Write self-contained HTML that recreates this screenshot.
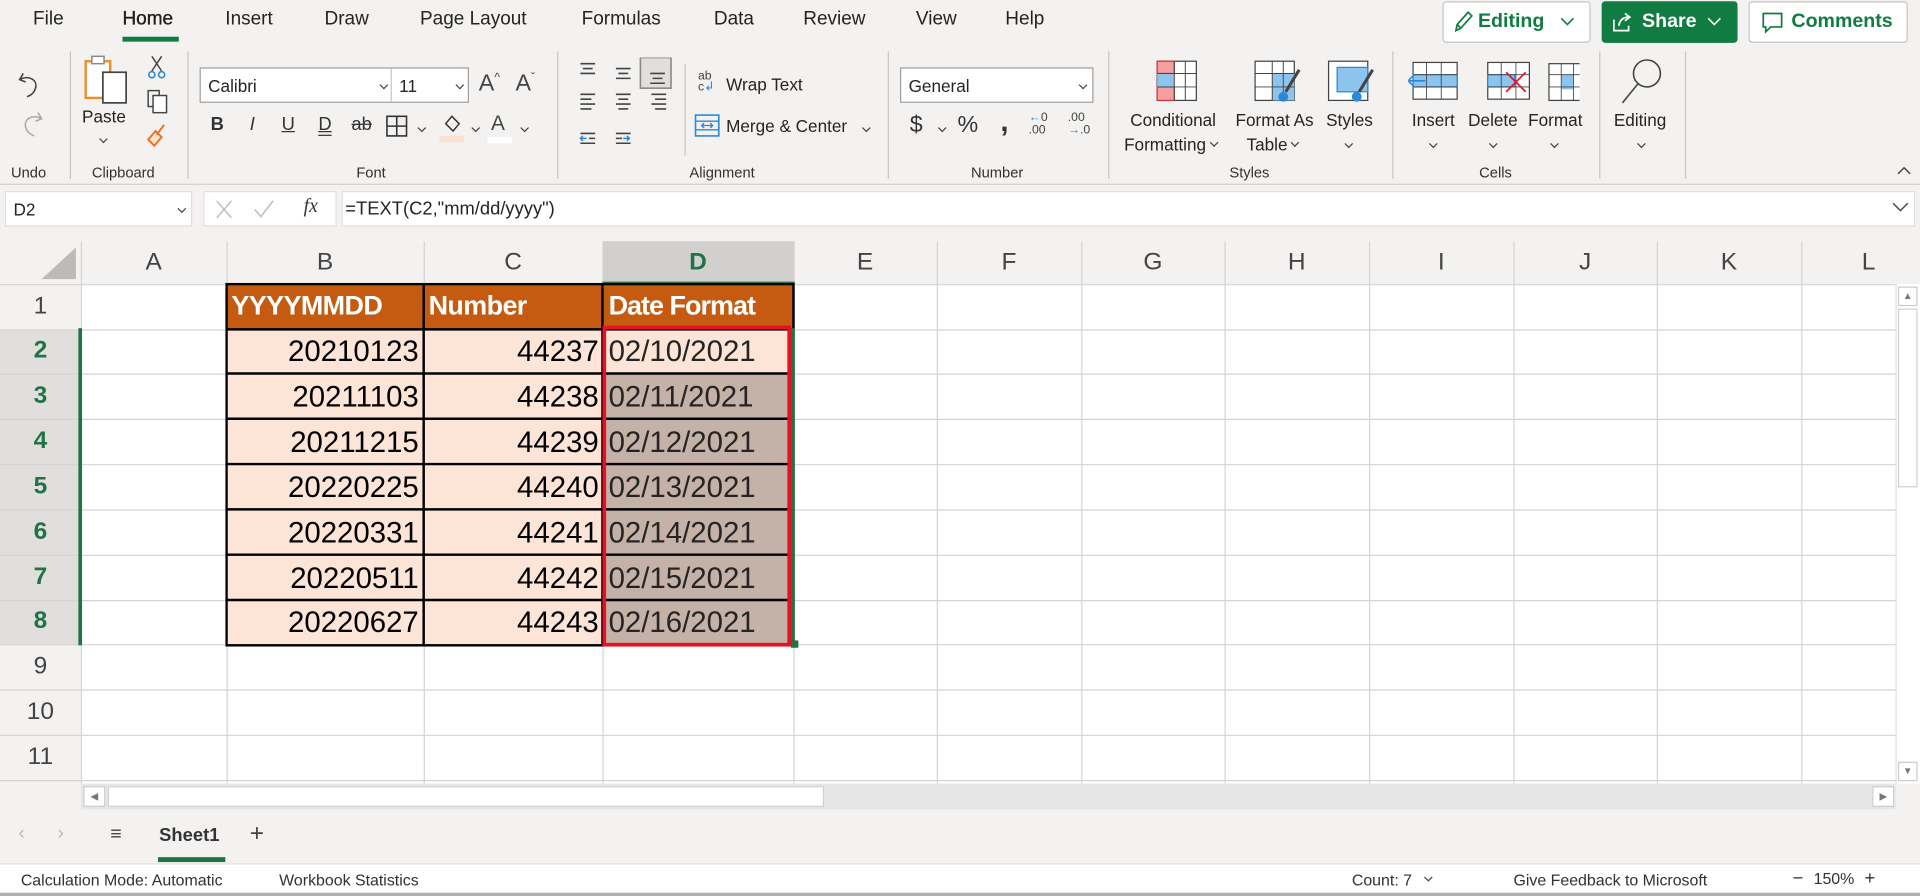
<!DOCTYPE html>
<html><head><meta charset="utf-8">
<style>
*{box-sizing:border-box;margin:0;padding:0}
html,body{width:1920px;height:896px;overflow:hidden;background:#f3f2f1}
#w{position:absolute;left:0;top:0;width:1568px;height:732px;transform:scale(1.22449);transform-origin:0 0;font-family:"Liberation Sans",sans-serif;color:#252423;background:#f3f2f1;overflow:hidden}
.a{position:absolute}
.t{position:absolute;font-size:15.5px;top:7px;color:#252423}
.lbl{position:absolute;top:134px;font-size:12px;color:#323130;white-space:nowrap}
.sep{position:absolute;top:42px;width:1px;height:104px;background:#c8c6c4}
.rt{position:absolute;font-size:14px;color:#252423;white-space:nowrap}
.chev{position:absolute;font-size:0;width:5px;height:5px;border-right:1.1px solid #444;border-bottom:1.1px solid #444;transform:rotate(45deg);margin-top:5px;margin-left:2px}
.ich{display:inline-block;width:5px;height:5px;border-right:1.1px solid #444;border-bottom:1.1px solid #444;transform:rotate(45deg);margin-left:4px;vertical-align:4px}
.hdr{position:absolute;font-size:20px;color:#444;text-align:center}
.num{position:absolute;font-size:24px;color:#000;text-align:right}
</style></head><body><div id="w">
<!-- tabs -->
<div class="t" style="left:27px">File</div>
<div class="t" style="left:100px;color:#201f1e;-webkit-text-stroke:0.3px #201f1e">Home</div>
<div class="a" style="left:100px;top:30px;width:46px;height:4px;background:#107c41"></div>
<div class="t" style="left:184px">Insert</div>
<div class="t" style="left:265px">Draw</div>
<div class="t" style="left:343px">Page Layout</div>
<div class="t" style="left:475px">Formulas</div>
<div class="t" style="left:583px">Data</div>
<div class="t" style="left:656px">Review</div>
<div class="t" style="left:748px">View</div>
<div class="t" style="left:821px">Help</div>
<!-- top buttons -->
<div class="a" style="left:1178px;top:1px;width:121px;height:34px;background:#fff;border:1px solid #c8c6c4;border-radius:3px"></div>
<svg class="a" style="left:1186px;top:8px" width="18" height="20" viewBox="0 0 18 20"><path d="M3 17 L4 12 L13 2 L16 5 L7 15 Z M4 12 L7 15" fill="none" stroke="#107c41" stroke-width="1.4"/></svg>
<div class="a" style="left:1207px;top:9px;font-size:16px;color:#107c41;font-weight:bold">Editing</div>
<svg class="a" style="left:1273px;top:13px" width="14" height="10"><path d="M2 2 L7 7 L12 2" fill="none" stroke="#107c41" stroke-width="1.3"/></svg>
<div class="a" style="left:1308px;top:1px;width:111px;height:34px;background:#107c41;border-radius:3px"></div>
<svg class="a" style="left:1315px;top:8px" width="20" height="20" viewBox="0 0 20 20"><path d="M3 8 V17 H15 V13 M7 13 C8 8 11 6 15 6 M12 3 L16 6 L12 9" fill="none" stroke="#fff" stroke-width="1.4"/></svg>
<div class="a" style="left:1341px;top:9px;font-size:16px;color:#fff;font-weight:bold">Share</div>
<svg class="a" style="left:1393px;top:13px" width="14" height="10"><path d="M2 2 L7 7 L12 2" fill="none" stroke="#fff" stroke-width="1.3"/></svg>
<div class="a" style="left:1428px;top:1px;width:130px;height:34px;background:#fff;border:1px solid #c8c6c4;border-radius:3px"></div>
<svg class="a" style="left:1438px;top:9px" width="20" height="20" viewBox="0 0 20 20"><path d="M2 2 H17 V13 H8 L4 17 V13 H2 Z" fill="none" stroke="#107c41" stroke-width="1.4"/></svg>
<div class="a" style="left:1463px;top:9px;font-size:16px;color:#107c41;font-weight:bold">Comments</div>
<!-- ribbon separators -->
<div class="sep" style="left:57px"></div><div class="sep" style="left:153px"></div><div class="sep" style="left:455px"></div><div class="sep" style="left:725px"></div><div class="sep" style="left:905px"></div><div class="sep" style="left:1137px"></div><div class="sep" style="left:1306px"></div><div class="sep" style="left:1376px"></div>
<div class="a" style="left:559px;top:52px;width:1px;height:75px;background:#c8c6c4"></div>
<div class="lbl" style="left:9px">Undo</div><div class="lbl" style="left:75px">Clipboard</div><div class="lbl" style="left:291px">Font</div><div class="lbl" style="left:563px">Alignment</div><div class="lbl" style="left:793px">Number</div><div class="lbl" style="left:1004px">Styles</div><div class="lbl" style="left:1208px">Cells</div>
<svg class="a" style="left:1547px;top:133px" width="16" height="12"><path d="M3 9 L8 4 L13 9" fill="none" stroke="#444" stroke-width="1.2"/></svg>
<!-- undo -->
<svg class="a" style="left:13px;top:56px" width="24" height="60" viewBox="0 0 24 60"><path d="M6 4 L3 9 L8 11 M3 9 C10 5 18 9 16 16 C15 20 12 22 9 23" fill="none" stroke="#444" stroke-width="1.3"/><path d="M18 36 L21 41 L16 43 M21 41 C14 37 6 41 8 48 C9 52 12 54 15 55" fill="none" stroke="#aaa" stroke-width="1.3"/></svg>
<!-- paste -->
<svg class="a" style="left:66px;top:44px" width="44" height="42" viewBox="0 0 44 42"><rect x="4" y="6" width="20" height="30" fill="#fff" stroke="#e8912d" stroke-width="2"/><rect x="9" y="2" width="10" height="6" fill="#fff" stroke="#888" stroke-width="1.2"/><rect x="18" y="15" width="19" height="25" fill="#fff" stroke="#444" stroke-width="1.4"/></svg>
<div class="rt" style="left:67px;top:87px">Paste</div><div class="chev" style="left:80px;top:106px"></div>
<svg class="a" style="left:118px;top:44px" width="22" height="80" viewBox="0 0 22 80"><path d="M6 2 L14 14 M14 2 L6 14" stroke="#444" stroke-width="1.2"/><circle cx="6" cy="17" r="2.5" fill="none" stroke="#2b88d8" stroke-width="1.3"/><circle cx="14" cy="17" r="2.5" fill="none" stroke="#2b88d8" stroke-width="1.3"/><rect x="3" y="30" width="9" height="13" fill="none" stroke="#444" stroke-width="1.2"/><rect x="7" y="34" width="11" height="14" fill="#fff" stroke="#444" stroke-width="1.2"/><path d="M16 58 L10 66 M3 70 L9 63 L14 68 L8 75 Z" fill="#fde3c5" stroke="#e8712d" stroke-width="1.6"/></svg>
<!-- font -->
<div class="a" style="left:163px;top:55px;width:220px;height:29px;background:#fff;border:1px solid #a19f9d"></div>
<div class="a" style="left:319px;top:56px;width:1px;height:27px;background:#c8c6c4"></div>
<div class="rt" style="left:170px;top:62px">Calibri</div><div class="chev" style="left:309px;top:62px"></div>
<div class="rt" style="left:326px;top:62px">11</div><div class="chev" style="left:371px;top:62px"></div>
<div class="a" style="left:391px;top:58px;font-size:19px;color:#444">A<span style="font-size:10px;vertical-align:top">^</span></div>
<div class="a" style="left:421px;top:58px;font-size:19px;color:#444">A<span style="font-size:10px;vertical-align:top">&#711;</span></div>
<div class="a" style="left:172px;top:93px;font-size:15px;font-weight:bold;color:#333">B</div>
<div class="a" style="left:204px;top:93px;font-size:15px;font-style:italic;color:#333">I</div>
<div class="a" style="left:230px;top:93px;font-size:15px;text-decoration:underline;color:#333">U</div>
<div class="a" style="left:260px;top:93px;font-size:15px;text-decoration:underline double;color:#333">D</div>
<div class="a" style="left:287px;top:93px;font-size:15px;text-decoration:line-through;color:#333">ab</div>
<svg class="a" style="left:315px;top:94px" width="20" height="20"><rect x="1" y="1" width="16" height="16" fill="none" stroke="#333" stroke-width="1.3"/><path d="M9 1 V17 M1 9 H17" stroke="#333" stroke-width="1.3"/></svg>
<div class="chev" style="left:340px;top:97px"></div>
<svg class="a" style="left:359px;top:91px" width="20" height="26"><path d="M5 10 L10 4 L16 10 L11 16 Z M5 10 L11 16" fill="none" stroke="#333" stroke-width="1.2"/><rect x="0" y="20" width="20" height="5" fill="#fbe0d1"/></svg>
<div class="chev" style="left:384px;top:97px"></div>
<div class="a" style="left:401px;top:91px;font-size:17px;color:#444">A</div><div class="a" style="left:398px;top:112px;width:20px;height:5px;background:#fff"></div>
<div class="chev" style="left:424px;top:97px"></div>
<!-- alignment -->
<svg class="a" style="left:468px;top:47px" width="85" height="80" viewBox="0 0 85 80">
<g stroke="#444" stroke-width="1.3"><path d="M6 5H18M8 9H16M6 13H18"/><path d="M35 9H47M37 13H45M35 17H47"/><rect x="55" y="0" width="25" height="25" fill="#e1dfdd" stroke="#8a8886"/><path d="M63 13H75M65 17H73M63 21H75"/>
<path d="M6 30H18M6 34H15M6 38H18M6 42H15"/><path d="M35 30H47M37 34H45M35 38H47M37 42H45"/><path d="M64 30H76M67 34H76M64 38H76M67 42H76"/>
<path d="M6 62H18M13 66H18M6 70H18"/><path d="M35 62H47M35 66H40M35 70H47"/></g>
<path d="M6 66H11M8 64L6 66L8 68" stroke="#2b88d8" stroke-width="1.2" fill="none"/><path d="M41 66H46M44 64L46 66L44 68" stroke="#2b88d8" stroke-width="1.2" fill="none"/></svg>
<div class="a" style="left:570px;top:58px;font-size:10px;line-height:9px;color:#444">ab<br>c<span style="color:#2b88d8">↲</span></div>
<div class="rt" style="left:593px;top:61px">Wrap Text</div>
<svg class="a" style="left:567px;top:93px" width="22" height="20"><rect x="1" y="1" width="19" height="17" fill="none" stroke="#2b88d8" stroke-width="1.3"/><path d="M1 6H20M1 13H20M6 9.5H15M8 7.5L6 9.5L8 11.5M13 7.5L15 9.5L13 11.5" stroke="#2b88d8" stroke-width="1.1" fill="none"/></svg>
<div class="rt" style="left:593px;top:95px">Merge &amp; Center</div><div class="chev" style="left:703px;top:97px"></div>
<!-- number -->
<div class="a" style="left:735px;top:55px;width:158px;height:29px;background:#fff;border:1px solid #a19f9d"></div>
<div class="rt" style="left:742px;top:62px">General</div><div class="chev" style="left:880px;top:62px"></div>
<div class="a" style="left:743px;top:92px;font-size:19px;color:#333">$</div><div class="chev" style="left:765px;top:97px"></div>
<div class="a" style="left:782px;top:92px;font-size:19px;color:#333">%</div>
<div class="a" style="left:817px;top:86px;font-size:24px;font-weight:bold;color:#333">,</div>
<div class="a" style="left:840px;top:92px;font-size:10px;line-height:10px;color:#444"><span style="color:#2b88d8">←</span>0<br>.00</div>
<div class="a" style="left:872px;top:92px;font-size:10px;line-height:10px;color:#444">.00<br><span style="color:#2b88d8">→</span>.0</div>
<!-- styles -->
<svg class="a" style="left:944px;top:49px" width="34" height="34" viewBox="0 0 34 34"><rect x="1" y="1" width="32" height="32" fill="#fff" stroke="#444"/><rect x="1" y="1" width="14" height="10" fill="#f4a0a0" stroke="#d13438"/><rect x="1" y="22" width="14" height="11" fill="#f4a0a0" stroke="#d13438"/><rect x="1" y="11" width="14" height="11" fill="#8cc4ee"/><path d="M1 11H33M1 22H33M15 1V33M24 1V33" stroke="#444" stroke-width=".8"/></svg>
<div class="rt" style="left:923px;top:90px">Conditional</div><div class="rt" style="left:918px;top:110px">Formatting<span class="ich"></span></div>
<svg class="a" style="left:1024px;top:49px" width="40" height="38" viewBox="0 0 40 38"><rect x="1" y="1" width="32" height="32" fill="#fff" stroke="#444"/><rect x="15" y="11" width="18" height="22" fill="#8cc4ee"/><path d="M1 11H33M1 22H33M15 1V33M24 1V33" stroke="#444" stroke-width=".8"/><path d="M37 8 L26 26" stroke="#444" stroke-width="2.5"/><circle cx="24" cy="30" r="4" fill="#2b88d8"/></svg>
<div class="rt" style="left:1009px;top:90px">Format As</div><div class="rt" style="left:1018px;top:110px">Table<span class="ich"></span></div>
<svg class="a" style="left:1084px;top:49px" width="40" height="38" viewBox="0 0 40 38"><rect x="1" y="1" width="32" height="32" fill="#fff" stroke="#444"/><rect x="8" y="6" width="25" height="20" fill="#8cc4ee" stroke="#2b88d8"/><path d="M37 8 L26 26" stroke="#444" stroke-width="2.5"/><circle cx="24" cy="30" r="4" fill="#2b88d8"/></svg>
<div class="rt" style="left:1083px;top:90px">Styles</div><div class="chev" style="left:1097px;top:110px"></div>
<!-- cells -->
<svg class="a" style="left:1150px;top:49px" width="140" height="36" viewBox="0 0 140 36"><g stroke="#444" fill="#fff"><rect x="4" y="2" width="36" height="30"/><rect x="65" y="2" width="34" height="30"/><rect x="115" y="3" width="36" height="30"/></g>
<rect x="4" y="12" width="36" height="10" fill="#8cc4ee" stroke="#2b88d8"/><rect x="65" y="12" width="22" height="10" fill="#8cc4ee" stroke="#2b88d8"/><rect x="125" y="12" width="10" height="12" fill="#8cc4ee"/>
<path d="M4 12H40M4 22H40M15 2V32M27 2V32M65 12H99M65 22H99M76 2V32M88 2V32M115 12H151M115 22H151M125 3V33M135 3V33" stroke="#444" stroke-width=".7"/>
<path d="M0 17H14M5 12L0 17L5 22" stroke="#2b88d8" stroke-width="1.3" fill="none"/><path d="M80 10L96 26M96 10L80 26" stroke="#e81123" stroke-width="1.4"/></svg>
<div class="rt" style="left:1153px;top:90px">Insert</div><div class="chev" style="left:1166px;top:110px"></div>
<div class="rt" style="left:1199px;top:90px">Delete</div><div class="chev" style="left:1215px;top:110px"></div>
<div class="rt" style="left:1248px;top:90px">Format</div><div class="chev" style="left:1265px;top:110px"></div>
<!-- editing -->
<svg class="a" style="left:1320px;top:46px" width="44" height="40"><circle cx="25" cy="14" r="11" fill="none" stroke="#444" stroke-width="1.3"/><path d="M18 22 L5 38" stroke="#444" stroke-width="1.3"/></svg>
<div class="rt" style="left:1318px;top:90px">Editing</div><div class="chev" style="left:1336px;top:110px"></div>
<!-- formula bar -->
<div class="a" style="left:0;top:150px;width:1568px;height:1px;background:#d2d0ce"></div>
<div class="a" style="left:4px;top:156px;width:153px;height:29px;background:#fff;border:1px solid #e1dfdd"></div>
<div class="rt" style="left:11px;top:163px">D2</div><div class="chev" style="left:144px;top:163px"></div>
<div class="a" style="left:166px;top:156px;width:109px;height:29px;background:#fff;border:1px solid #e1dfdd"></div>
<svg class="a" style="left:174px;top:161px" width="60" height="20"><path d="M3 3L15 17M15 3L3 17" stroke="#bbb" stroke-width="1.2"/><path d="M34 10L39 16L49 3" stroke="#bbb" stroke-width="1.2" fill="none"/></svg>
<div class="a" style="left:248px;top:160px;font-size:16px;font-style:italic;font-family:'Liberation Serif',serif;color:#333">fx</div>
<div class="a" style="left:279px;top:156px;width:1285px;height:29px;background:#fff;border:1px solid #e1dfdd"></div>
<div class="rt" style="left:282px;top:162px;font-size:15px">=TEXT(C2,"mm/dd/yyyy")</div>
<svg class="a" style="left:1544px;top:162px" width="16" height="14"><path d="M2 4L8 10L14 4" fill="none" stroke="#444" stroke-width="1.2"/></svg>
<!-- grid area -->
<div class="a" style="left:0;top:197px;width:1548px;height:443px;background:#fff"></div>
<div class="a" style="left:0;top:197px;width:1548px;height:35px;background:#f3f2f1"></div>
<div class="a" style="left:0;top:232px;width:66px;height:408px;background:#f3f2f1"></div>
<div class="a" style="left:0;top:269px;width:66px;height:257px;background:#e1dfdd"></div>
<div class="a" style="left:492px;top:197px;width:156px;height:35px;background:#d2d0ce"></div>
<svg class="a" style="left:20px;top:200px" width="44" height="30"><path d="M42 2 V28 H14 Z" fill="#bdbbb9"/></svg>
<svg class="a" style="left:0;top:197px" width="1548" height="443">
<g stroke="#d4d4d4" stroke-width="1">
<path d="M66.5 0V443M185.5 0V443M346.5 0V443M492.5 0V443M648.5 0V443M765.5 0V443M883.5 0V443M1000.5 0V443M1118.5 0V443M1236.5 0V443M1353.5 0V443M1471.5 0V443"/>
<path d="M0 35.5H1548M0 72.5H1548M0 108.5H1548M0 145.5H1548M0 182.5H1548M0 219.5H1548M0 256.5H1548M0 293.5H1548M0 329.5H1548M0 366.5H1548M0 403.5H1548M0 440.5H1548"/>
</g></svg>
<div class="hdr" style="left:66px;top:203px;width:119px">A</div><div class="hdr" style="left:185px;top:203px;width:161px">B</div><div class="hdr" style="left:346px;top:203px;width:146px">C</div><div class="hdr" style="left:492px;top:203px;width:156px;color:#217346;font-weight:bold">D</div>
<div class="hdr" style="left:648px;top:203px;width:117px">E</div><div class="hdr" style="left:765px;top:203px;width:118px">F</div><div class="hdr" style="left:883px;top:203px;width:117px">G</div><div class="hdr" style="left:1000px;top:203px;width:118px">H</div><div class="hdr" style="left:1118px;top:203px;width:118px">I</div><div class="hdr" style="left:1236px;top:203px;width:117px">J</div><div class="hdr" style="left:1353px;top:203px;width:118px">K</div><div class="hdr" style="left:1471px;top:203px;width:110px">L</div>
<div class="hdr" style="left:0;top:239px;width:66px">1</div>
<div class="hdr" style="left:0;top:275px;width:66px;color:#217346;font-weight:bold">2</div>
<div class="hdr" style="left:0;top:312px;width:66px;color:#217346;font-weight:bold">3</div>
<div class="hdr" style="left:0;top:349px;width:66px;color:#217346;font-weight:bold">4</div>
<div class="hdr" style="left:0;top:386px;width:66px;color:#217346;font-weight:bold">5</div>
<div class="hdr" style="left:0;top:423px;width:66px;color:#217346;font-weight:bold">6</div>
<div class="hdr" style="left:0;top:460px;width:66px;color:#217346;font-weight:bold">7</div>
<div class="hdr" style="left:0;top:496px;width:66px;color:#217346;font-weight:bold">8</div>
<div class="hdr" style="left:0;top:533px;width:66px">9</div><div class="hdr" style="left:0;top:570px;width:66px">10</div><div class="hdr" style="left:0;top:607px;width:66px">11</div>
<!-- green selection markers -->
<div class="a" style="left:64px;top:268px;width:3px;height:259px;background:#217346"></div>
<div class="a" style="left:492px;top:230px;width:157px;height:3px;background:#217346"></div>
<!-- table -->
<div class="a" style="left:185px;top:232px;width:463px;height:37px;background:#c55a11"></div>
<div class="a" style="left:185px;top:269px;width:307px;height:257px;background:#fce4d6"></div>
<div class="a" style="left:492px;top:269px;width:156px;height:37px;background:#fce4d6"></div>
<div class="a" style="left:492px;top:305px;width:156px;height:221px;background:#c4b1a8"></div>
<svg class="a" style="left:184px;top:231px" width="466" height="298"><g stroke="#000" stroke-width="2" fill="none"><rect x="1" y="1" width="463" height="295"/><path d="M162 1V296M308 1V296M1 38H464M1 74H464M1 111H464M1 148H464M1 185H464M1 222H464M1 259H464"/></g></svg>
<div class="a" style="left:189px;top:237px;font-size:22px;font-weight:bold;color:#fff;letter-spacing:-0.5px">YYYYMMDD</div>
<div class="a" style="left:350px;top:237px;font-size:22px;font-weight:bold;color:#fff;letter-spacing:-0.5px">Number</div>
<div class="a" style="left:497px;top:237px;font-size:22px;font-weight:bold;color:#fff;letter-spacing:-0.8px">Date Format</div>
<div class="num" style="left:186px;top:274px;width:156px">20210123</div><div class="num" style="left:347px;top:274px;width:142px">44237</div><div class="a" style="left:497px;top:274px;font-size:24px">02/10/2021</div>
<div class="num" style="left:186px;top:311px;width:156px">20211103</div><div class="num" style="left:347px;top:311px;width:142px">44238</div><div class="a" style="left:497px;top:311px;font-size:24px">02/11/2021</div>
<div class="num" style="left:186px;top:348px;width:156px">20211215</div><div class="num" style="left:347px;top:348px;width:142px">44239</div><div class="a" style="left:497px;top:348px;font-size:24px">02/12/2021</div>
<div class="num" style="left:186px;top:385px;width:156px">20220225</div><div class="num" style="left:347px;top:385px;width:142px">44240</div><div class="a" style="left:497px;top:385px;font-size:24px">02/13/2021</div>
<div class="num" style="left:186px;top:422px;width:156px">20220331</div><div class="num" style="left:347px;top:422px;width:142px">44241</div><div class="a" style="left:497px;top:422px;font-size:24px">02/14/2021</div>
<div class="num" style="left:186px;top:459px;width:156px">20220511</div><div class="num" style="left:347px;top:459px;width:142px">44242</div><div class="a" style="left:497px;top:459px;font-size:24px">02/15/2021</div>
<div class="num" style="left:186px;top:495px;width:156px">20220627</div><div class="num" style="left:347px;top:495px;width:142px">44243</div><div class="a" style="left:497px;top:495px;font-size:24px">02/16/2021</div>
<div class="a" style="left:646px;top:268px;width:3px;height:259px;background:#217346"></div>
<div class="a" style="left:492px;top:266px;width:154px;height:262px;border:3px solid #e81123"></div>
<div class="a" style="left:646px;top:523px;width:6px;height:6px;background:#217346"></div>
<!-- scrollbars -->
<div class="a" style="left:1548px;top:232px;width:20px;height:408px;background:#fff;border-left:1px solid #e1dfdd"></div>
<div class="a" style="left:1550px;top:234px;width:16px;height:16px;border:1px solid #ccc;font-size:8px;text-align:center;line-height:14px;color:#777">▲</div>
<div class="a" style="left:1550px;top:252px;width:16px;height:146px;background:#fff;border:1px solid #d0d0d0"></div>
<div class="a" style="left:1550px;top:622px;width:16px;height:16px;border:1px solid #ccc;font-size:8px;text-align:center;line-height:14px;color:#777">▼</div>
<div class="a" style="left:66px;top:640px;width:1482px;height:21px;background:#e6e6e6"></div>
<div class="a" style="left:68px;top:642px;width:18px;height:17px;background:#fff;border:1px solid #ccc;font-size:8px;line-height:15px;text-align:center;color:#777">◀</div>
<div class="a" style="left:88px;top:642px;width:585px;height:17px;background:#fff;border:1px solid #d0d0d0"></div>
<div class="a" style="left:1529px;top:642px;width:18px;height:17px;background:#fff;border:1px solid #ccc;font-size:8px;line-height:15px;text-align:center;color:#777">▶</div>
<!-- sheet tabs -->
<div class="a" style="left:15px;top:672px;font-size:16px;color:#bbb">&lsaquo;&nbsp;&nbsp;&nbsp;&nbsp;&nbsp;&nbsp;&rsaquo;</div>
<div class="a" style="left:90px;top:673px;font-size:16px;color:#444">&#8801;</div>
<div class="a" style="left:130px;top:674px;font-size:15px;font-weight:bold;color:#333">Sheet1</div>
<div class="a" style="left:129px;top:700px;width:55px;height:4px;background:#217346"></div>
<div class="a" style="left:204px;top:670px;font-size:20px;color:#444">+</div>
<!-- status bar -->
<div class="a" style="left:0;top:705px;width:1568px;height:27px;background:#fff;border-top:1px solid #e1dfdd"></div>
<div class="a" style="left:17px;top:711px;font-size:13px;color:#323130">Calculation Mode: Automatic</div>
<div class="a" style="left:228px;top:711px;font-size:13px;color:#323130">Workbook Statistics</div>
<div class="a" style="left:1104px;top:711px;font-size:13px;color:#323130">Count: 7 &nbsp;<span class="ich"></span></div>
<div class="a" style="left:1236px;top:711px;font-size:13px;color:#323130">Give Feedback to Microsoft</div>
<div class="a" style="left:1464px;top:709px;font-size:15px;color:#323130">&minus;&nbsp;&nbsp;<span style="font-size:13px">150%</span>&nbsp;&nbsp;+</div>
<div class="a" style="left:0;top:729px;width:1568px;height:3px;background:#b0b0b0"></div>
</div></body></html>
